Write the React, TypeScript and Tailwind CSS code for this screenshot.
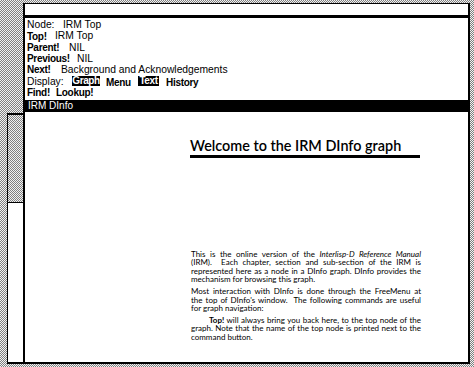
const DITHER =
  "bg-[repeating-conic-gradient(#808080_0_25%,#f2f2f2_0_50%)] bg-[length:2px_2px]";

function MenuLine({ children }: { children: React.ReactNode }) {
  return <div className="flex items-center h-[11.33px] whitespace-nowrap">{children}</div>;
}

function Cmd({ w, children }: { w?: number; children: React.ReactNode }) {
  return (
    <span className="font-bold text-[10px] tracking-[-0.3px]" style={w ? { width: w } : undefined}>
      {children}
    </span>
  );
}

function Val({ children }: { children: React.ReactNode }) {
  return <span className="text-[10.3px]">{children}</span>;
}

function Lit({ w, children }: { w: number; children: React.ReactNode }) {
  return (
    <span
      className="inline-block h-[10px] leading-[10px] bg-black text-white font-bold text-[10px] tracking-[-0.4px] text-center overflow-hidden"
      style={{ width: w }}
    >
      {children}
    </span>
  );
}

function JLine({ children, last }: { children: React.ReactNode; last?: boolean }) {
  return (
    <div
      className={
        last ? "h-[8.4px] leading-[8.4px]" : "h-[8.4px] leading-[8.4px] text-justify [text-align-last:justify]"
      }
    >
      {children}
    </div>
  );
}

export default function App() {
  return (
    <div
      className={`w-[474px] h-[367px] flex pt-[3px] pb-[3px] pr-[4px] font-['Liberation_Sans',Arial,sans-serif] text-black ${DITHER}`}
    >
      {/* scroll bar column */}
      <div className="w-[23px] flex flex-col pt-[110px]">
        <div className="ml-[7px] flex-1 bg-white border-l border-y-2 border-black flex flex-col">
          <div className={`h-[88px] border-b border-black ${DITHER}`} />
        </div>
      </div>

      {/* windows */}
      <div className="flex-1 flex flex-col border-x-2 border-b-2 border-black bg-white">
        {/* FreeMenu window */}
        <div className="border-t border-black h-[12px]" />
        <div className="h-[3px] bg-black" />
        <div className="h-[82px] pl-[2px] pt-[1px]">
          <MenuLine>
            <span className="text-[10.3px] w-[36px]">Node:</span>
            <Val>IRM Top</Val>
          </MenuLine>
          <MenuLine>
            <Cmd w={28}>Top!</Cmd>
            <Val>IRM Top</Val>
          </MenuLine>
          <MenuLine>
            <Cmd w={42}>Parent!</Cmd>
            <Val>NIL</Val>
          </MenuLine>
          <MenuLine>
            <Cmd w={50}>Previous!</Cmd>
            <Val>NIL</Val>
          </MenuLine>
          <MenuLine>
            <Cmd w={34}>Next!</Cmd>
            <Val>Background and Acknowledgements</Val>
          </MenuLine>
          <MenuLine>
            <span className="text-[10.3px] w-[45px]">Display:</span>
            <Lit w={28}>Graph</Lit>
            <span className="ml-[6px] w-[32px]">
              <Cmd>Menu</Cmd>
            </span>
            <Lit w={21}>Text</Lit>
            <span className="ml-[7px]">
              <Cmd>History</Cmd>
            </span>
          </MenuLine>
          <MenuLine>
            <Cmd w={29}>Find!</Cmd>
            <Cmd>Lookup!</Cmd>
          </MenuLine>
        </div>

        {/* DInfo title bar */}
        <div className="h-[12px] bg-black text-white text-[10px] leading-[12px] pl-[3px]">IRM DInfo</div>

        {/* DInfo graph window body */}
        <div className="flex-1 pl-[165px] pt-[27px]">
          <div className="font-['Lato',sans-serif] font-semibold text-[14.4px] leading-[14px] whitespace-nowrap">
            Welcome to the IRM DInfo graph
          </div>
          <div className="mt-[2px] h-[3px] w-[230px] bg-black" />

          <div className="mt-[92px] ml-[1px] w-[230px] font-['Lato',sans-serif] text-[8px]">
            <JLine>
              This is the online version of the <i>Interlisp-D Reference Manual</i>
            </JLine>
            <JLine>(IRM).&nbsp; Each chapter, section and sub-section of the IRM is</JLine>
            <JLine>represented here as a node in a DInfo graph. DInfo provides the</JLine>
            <JLine last>mechanism for browsing this graph.</JLine>

            <div className="mt-[3.6px]" />
            <JLine>Most interaction with DInfo is done through the FreeMenu at</JLine>
            <JLine>the top of DInfo's window.&nbsp; The following commands are useful</JLine>
            <JLine last>for graph navigation:</JLine>

            <div className="mt-[3.6px]" />
            <div className="pl-[18px]">
              <JLine>
                <b>Top!</b> will always bring you back here, to the top node of the
              </JLine>
            </div>
            <JLine>graph. Note that the name of the top node is printed next to the</JLine>
            <JLine last>command button.</JLine>
          </div>
        </div>
      </div>
    </div>
  );
}
